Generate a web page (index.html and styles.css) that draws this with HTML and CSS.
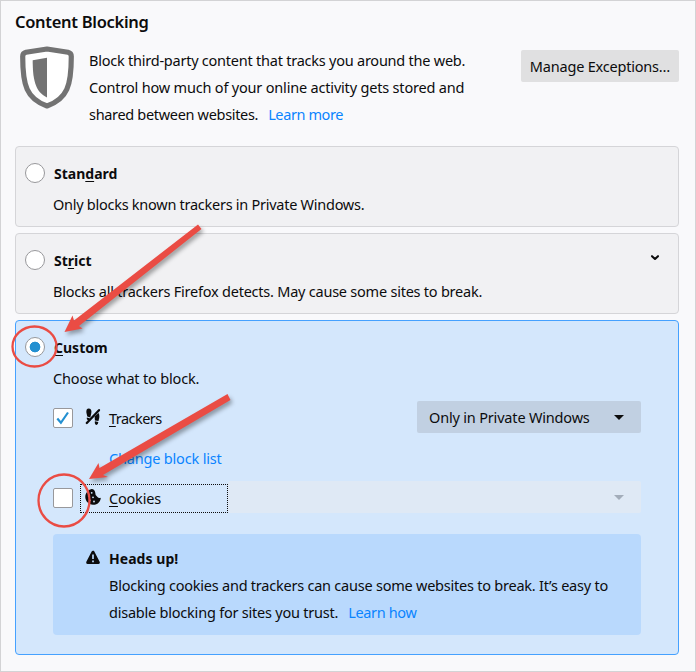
FILE: index.html
```html
<!DOCTYPE html>
<html lang="en">
<head>
<meta charset="utf-8">
<title>Content Blocking</title>
<link rel="stylesheet" href="styles.css">
</head>
<body>
<main class="page">
  <h1>Content Blocking</h1>
  <section class="intro">
    <svg class="shield" viewBox="0 0 54 64" width="54" height="64">
      <path d="M27 3L6 6.200Q2.700 7 2.700 10.500C2.700 39 6.500 53 27 60C47.500 53 51.300 39 51.300 10.500Q51.300 7 48 6.200Z" fill="#fff" stroke="#737373" stroke-width="5.200" stroke-linejoin="round"/>
      <path d="M27 11.800L12.700 14.300C12.700 33 15 46 27 51.500Z" fill="#737373"/>
    </svg>
    <p class="intro-text"><span class="t-a">Block third-party content that tracks you around the web.</span><br><span class="t-b">Control how much of your online activity gets stored and</span><br><span class="t-c">shared between websites.</span><a class="t-d">Learn more</a></p>
    <button class="manage">Manage Exceptions…</button>
  </section>

  <section class="card">
    <div class="title"><i class="radio"></i><b class="t-std">Stan<u>d</u>ard</b></div>
    <p class="desc t-only">Only blocks known trackers in Private Windows.</p>
  </section>

  <section class="card">
    <div class="title"><i class="radio"></i><b class="t-strict">St<u>r</u>ict</b>
      <svg class="chevron" width="10" height="8" viewBox="0 0 10 8"><path d="M2 2.200L5 5L8 2.200" fill="none" stroke="#0c0c0d" stroke-width="2.100" stroke-linecap="round" stroke-linejoin="round"/></svg>
    </div>
    <p class="desc t-blocks">Blocks all trackers Firefox detects. May cause some sites to break.</p>
  </section>

  <section class="card custom">
    <div class="title"><i class="radio on"></i><b class="t-custom"><u>C</u>ustom</b></div>
    <p class="desc t-choose">Choose what to block.</p>
    <div class="option">
      <i class="check"><svg width="20" height="20" viewBox="0 0 20 20"><path d="M4.300 10.500L7.900 14.800L15 4.500" fill="none" stroke="#2390d1" stroke-width="2.200"/></svg></i>
      <div class="label">
        <svg class="icon" width="16" height="18" viewBox="0 0 16 18"><g fill="#0c0c0d"><path d="M1.400 4.800C1 2 2.100 .4 4 .6C6.300 .8 6.900 3 6.200 5.800L5.300 9.500L2.300 8.600Z"/><path d="M1.800 9.500L4.800 10.200L4 12.600Q1.400 12 1.800 9.500Z"/><path d="M9.600 8.500L13.500 5C15.200 8 14 11 13.500 13L9.900 12.500Z"/><path d="M9.900 13.300L13.300 13.900Q13 17.200 11.300 17Q9.400 16.600 9.900 13.300Z"/></g><path d="M1.800 15L14 2.200" stroke="#0c0c0d" stroke-width="2.300" stroke-linecap="round"/></svg>
        <span class="t-track"><u>T</u>rackers</span>
      </div>
      <div class="select private"><span class="t-priv">Only in Private Windows</span><i class="arrow"></i></div>
    </div>
    <a class="change t-change">Change block list</a>
    <div class="option">
      <i class="check"></i>
      <div class="label focus">
        <svg class="icon" width="16" height="18" viewBox="0 0 16 18"><path d="M6.500 1Q9.500 .8 10.200 4.500Q10 7.500 12.500 9Q13.800 10.800 15.800 9.700C15.500 14 12.300 16.900 8 16.700C3.500 16.500.3 13 .3 9C.3 5 3 2 6.500 1Z" fill="#0c0c0d"/><g fill="#d4e7fc"><circle cx="6.700" cy="4.800" r=".9"/><circle cx="3.700" cy="8" r=".9"/><circle cx="4.700" cy="12.300" r=".9"/><circle cx="8" cy="9.300" r=".9"/><circle cx="9" cy="13.500" r=".9"/></g></svg>
        <span class="t-cook"><u>C</u>ookies</span>
      </div>
      <div class="select disabled"><i class="arrow"></i></div>
    </div>
    <div class="notice">
      <svg class="warn" width="14" height="15" viewBox="0 0 14 15"><path d="M7 2.200L12.300 12.500H1.700Z" fill="#0c0c0d" stroke="#0c0c0d" stroke-width="3" stroke-linejoin="round"/><path d="M7 4.500V9M7 10.500V12.200" stroke="#b9d9fd" stroke-width="1.700"/></svg>
      <p><b class="t-heads">Heads up!</b><br><span class="t-bc">Blocking cookies and trackers can cause some websites to break. It’s easy to</span><br><span class="t-dis">disable blocking for sites you trust.</span><a class="t-how">Learn how</a></p>
    </div>
  </section>
</main>

<svg class="annotations" width="696" height="672" viewBox="0 0 696 672">
  <g fill="none" stroke="#ea4c44" stroke-width="2.300"><ellipse cx="34.500" cy="346.500" rx="22" ry="20"/><ellipse cx="64" cy="500.500" rx="25.500" ry="26"/></g>
  <g class="arrows" fill="#ea4c44">
    <path d="M198 224.500L201.500 229L79 326L82.500 328.500L64.500 332L72.500 315.500L74 320.500Z"/>
    <path d="M227.500 394L230.500 400L103 475L108 477L89 479L98.500 463L99.500 468Z"/>
  </g>
</svg>
</body>
</html>
```
FILE: styles.css
```css
* { box-sizing: border-box; }
body { margin: 0; background: #f9f9fb; color: #0c0c0d; font: 14.5px/27px "Noto Sans", "Open Sans", sans-serif; }
h1, p { margin: 0; font-weight: normal; }
span, a, b, h1, .desc, button { white-space: nowrap; }
u { text-decoration-thickness: 1px; text-underline-offset: 2px; }
a { color: #0a84ff; }
.page { height: 672px; padding: 7px 16px 0 14px; border: 1px solid #d3d3d5; }
h1 { height: 28px; font-size: 16.5px; font-weight: 600; letter-spacing: -.3px; }
.intro { display: flex; height: 110px; padding-top: 11px; }
.shield { margin: -1px 0 0 5px; flex: none; }
.intro-text { margin-left: 15px; flex: 1; }
.t-c, .t-dis { margin-right: 10px; }
.manage { width: 158px; height: 32px; margin-top: 3px; padding: 0; border: 0; border-radius: 2px; background: #e0e0e1; color: inherit; font: inherit; letter-spacing: -.2px; }
.card { height: 81px; margin-bottom: 6px; padding: 13px 37px 0 9px; border: 1px solid #d5d5d8; border-radius: 4px; background: #f1f1f3; }
.custom { height: 335px; background: #d4e7fc; border-color: #45a1ff; }
.title { display: flex; align-items: center; height: 27px; }
.radio { width: 20px; height: 20px; margin: -2px 9px 0 0; border: 1px solid #98989b; border-radius: 50%; background: #fff; }
.radio.on { background: radial-gradient(circle, #2390d1 0 5px, #fff 5.700px); }
.chevron { margin: -5px -19px 0 auto; }
.desc { margin: 4px 0 0 28px; line-height: 27px; }
.option { display: flex; align-items: center; height: 34px; margin-left: 28px; }
.desc + .option { margin-top: 9px; }
.check { width: 20px; height: 20px; flex: none; border: 1px solid #98989b; border-radius: 2px; background: #fff; }
.check svg { display: block; margin: -1px; }
.label { display: flex; align-items: center; width: 148px; height: 29px; margin-left: 7px; padding-left: 4px; border: 1px solid transparent; }
.focus { border: 1px dotted #0c0c0d; }
.icon { margin: -2px 8px 0 0; }
.select { display: flex; align-items: center; width: 224px; height: 32px; margin: 0 0 2px auto; padding: 0 17px 0 12px; border-radius: 2px; background: #c1d0e2; }
.arrow { margin-left: auto; border: 5px solid transparent; border-top-color: #0c0c0d; border-bottom: 0; }
.disabled { flex: 1; width: auto; background: #dfe9f5; }
.disabled .arrow { border-top-color: #a3adba; }
.change { display: block; height: 27px; margin: 10px 0 9px 84px; }
.notice { display: flex; height: 101px; margin: 19px 0 0 28px; padding: 11px 0 0 33px; border-radius: 4px; background: #b9d9fd; }
.warn { flex: none; margin: 5px 9px 0 0; }
.annotations { position: absolute; left: 0; top: 0; }
.arrows { filter: drop-shadow(2px 3px 2px rgba(0, 0, 0, .35)); }
b { font-size: 14px; }
.intro-text, .desc, .notice span { letter-spacing: -.2px; }
.t-a { letter-spacing: -.235px; }
.t-b { letter-spacing: -.185px; }
.t-c { letter-spacing: -.32px; }
.t-d { letter-spacing: -.4px; }
.t-only { letter-spacing: -.265px; }
.t-blocks, .notice .t-bc { letter-spacing: -.23px; }
.t-choose { letter-spacing: -.17px; }
.t-track { letter-spacing: -.55px; }
.t-cook { letter-spacing: -.2px; }
.t-priv, .t-change { letter-spacing: -.18px; }
.notice .t-dis { letter-spacing: -.22px; }
.t-how { letter-spacing: -.35px; }
.t-heads { letter-spacing: .05px; }
```
